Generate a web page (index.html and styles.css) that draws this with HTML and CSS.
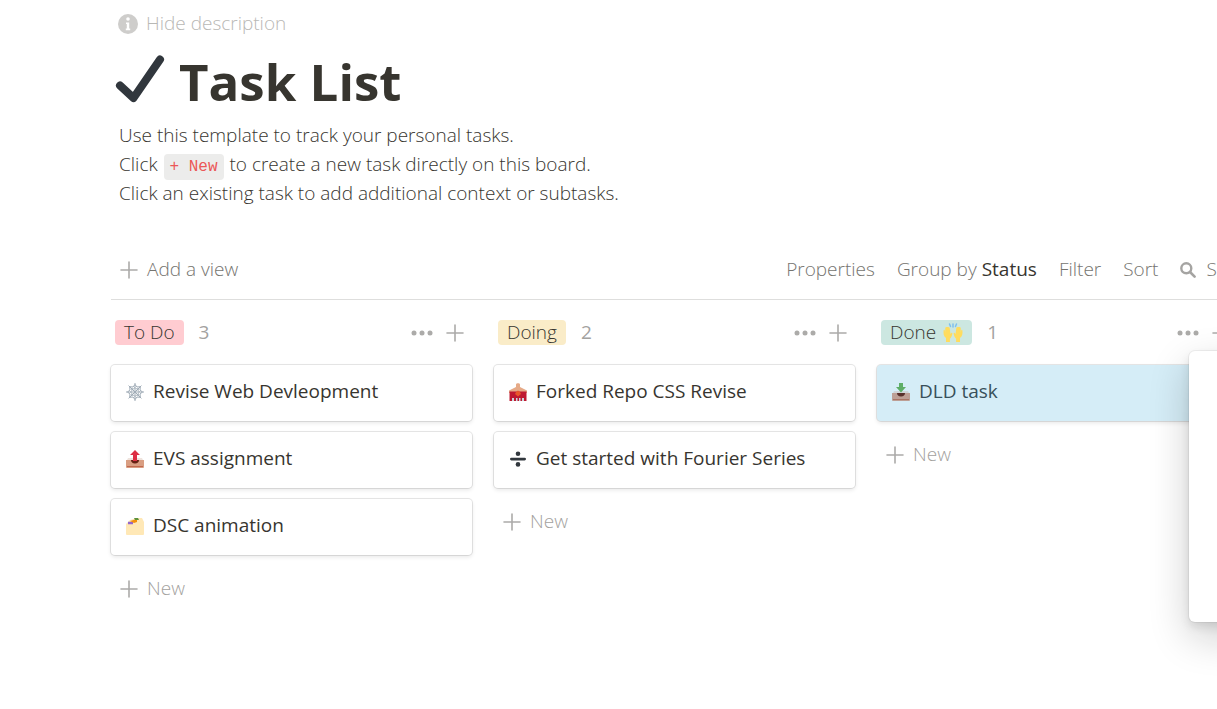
FILE: index.html
```html
<!DOCTYPE html>
<html lang="en">
<head>
    <meta charset="UTF-8">
    <meta name="viewport" content="width=device-width, initial-scale=1.0">
    <title>Task List</title>
    <link rel="stylesheet" href="styles.css">
</head>
<body>
    <!-- shared icons -->
    <svg class="sprite" aria-hidden="true">
        <symbol id="plus" viewBox="0 0 18 18"><path d="M9 1v16M1 9h16" fill="none" stroke="currentColor" stroke-width="1.6" stroke-linecap="round"/></symbol>
        <symbol id="dots" viewBox="0 0 22 6"><circle cx="3" cy="3" r="2.5"/><circle cx="11" cy="3" r="2.5"/><circle cx="19" cy="3" r="2.5"/></symbol>
    </svg>

    <main class="page">
        <button class="hide-description">
            <svg class="icon-info" viewBox="0 0 20 20"><circle cx="10" cy="10" r="10" fill="currentColor"/><circle cx="10" cy="5" r="1.8" fill="#fff"/><path d="M8 8.5h3.2v6h1v1.7H7.8v-1.7h1V10H8z" fill="#fff"/></svg>
            Hide description
        </button>

        <header class="title">
            <svg class="icon-check" viewBox="0 0 50 50"><path d="M5 30.500L18.500 43L45 4.500" fill="none" stroke="#31373d" stroke-width="8" stroke-linecap="round" stroke-linejoin="round"/></svg>
            <h1>Task List</h1>
        </header>

        <div class="description">
            <p>Use this template to track your personal tasks.</p>
            <p>Click <code>+ New</code> to create a new task directly on this board.</p>
            <p>Click an existing task to add additional context or subtasks.</p>
        </div>

        <nav class="toolbar">
            <button class="add-view"><svg class="icon-plus"><use href="#plus"/></svg>Add a view</button>
            <div class="toolbar-right">
                <button>Properties</button>
                <button>Group by <span class="group-name">Status</span></button>
                <button>Filter</button>
                <button>Sort</button>
                <button class="search"><svg class="icon-search" viewBox="0 0 16 16"><circle cx="6.300" cy="6.300" r="5" fill="none" stroke="currentColor" stroke-width="2.400"/><path d="M10 10l4.600 4.600" stroke="currentColor" stroke-width="2.600" stroke-linecap="round"/></svg>Search</button>
            </div>
        </nav>

        <div class="board">
            <section class="column">
                <div class="column-head">
                    <h2 class="tag tag-red">To Do</h2>
                    <span class="count">3</span>
                    <button class="more" aria-label="More"><svg class="icon-dots"><use href="#dots"/></svg></button>
                    <button aria-label="Add"><svg class="icon-plus"><use href="#plus"/></svg></button>
                </div>
                <article class="card">
                    <svg class="emoji" viewBox="0 0 18 18"><g fill="none" stroke="#9fabb6" stroke-width="1"><path d="M9 0v18M0 9h18M2.600 2.600l12.800 12.800M15.400 2.600L2.600 15.400"/><path d="M9 1.500l2 2.500 3.300-.3-.3 3.300 2.500 2-2.500 2 .3 3.300-3.300-.3-2 2.500-2-2.500-3.300.3.300-3.300-2.500-2 2.500-2-.3-3.300L7 4zM9 4.500l1.300 1.300 1.900 0v1.900L13.500 9l-1.300 1.300v1.900h-1.900L9 13.500l-1.300-1.300H5.800v-1.900L4.500 9l1.300-1.300V5.800h1.900z"/></g></svg>
                    <h3>Revise Web Devleopment</h3>
                </article>
                <article class="card">
                    <svg class="emoji" viewBox="0 0 18 18"><path d="M2 8h14l2 4H0z" fill="#efe3dd"/><path d="M0 10h18v7a1 1 0 0 1-1 1H1a1 1 0 0 1-1-1z" fill="#d99e82"/><path d="M5 10h8c0 2-1.500 3.500-4 3.500S5 12 5 10z" fill="#662113"/><path d="M9 0l5 5h-3v6H7V5H4z" fill="#dd2e44"/><path d="M1 16.500h16" stroke="#c1694f"/></svg>
                    <h3>EVS assignment</h3>
                </article>
                <article class="card">
                    <svg class="emoji" viewBox="0 0 18 18"><path d="M0 7l4-4 7-2h5l2 4v12a1 1 0 0 1-1 1H1a1 1 0 0 1-1-1z" fill="#ffe8b6"/><path d="M2 6h5" stroke="#9266cc" stroke-width="2.500"/><path d="M4 4l7-2v3L8 6z" fill="#f4900c"/><path d="M8 1h4l1 2H9z" fill="#5c913b"/></svg>
                    <h3>DSC animation</h3>
                </article>
                <button class="new"><svg class="icon-plus"><use href="#plus"/></svg>New</button>
            </section>

            <section class="column">
                <div class="column-head">
                    <h2 class="tag tag-yellow">Doing</h2>
                    <span class="count">2</span>
                    <button class="more" aria-label="More"><svg class="icon-dots"><use href="#dots"/></svg></button>
                    <button aria-label="Add"><svg class="icon-plus"><use href="#plus"/></svg></button>
                </div>
                <article class="card">
                    <svg class="emoji" viewBox="0 0 18 18"><path d="M7 1.500C7-.2 11-.2 11 1.500V4l7 3.500V10H0V7.500L7 4z" fill="#e6aa87"/><path d="M.5 8.500h17V18H.5z" fill="#be1931"/><path d="M7 9l2-1.500L11 9l1 2-3 2.500L6 11z" fill="#e8562b"/><path d="M3 15h2v3H3zM7 15h1.500v3H7zM10 15h1.500v3H10zM13 15h2v3h-2z" fill="#ccd6dd"/></svg>
                    <h3>Forked Repo CSS Revise</h3>
                </article>
                <article class="card">
                    <svg class="emoji" viewBox="0 0 18 18"><g fill="#31373d"><rect x="1" y="7.700" width="16" height="2.800" rx="1.400"/><circle cx="9" cy="3.800" r="2.300"/><circle cx="9" cy="14.400" r="2.300"/></g></svg>
                    <h3>Get started with Fourier Series</h3>
                </article>
                <button class="new"><svg class="icon-plus"><use href="#plus"/></svg>New</button>
            </section>

            <section class="column">
                <div class="column-head">
                    <h2 class="tag tag-green">Done
                        <svg class="hands" viewBox="0 0 20 20"><g fill="none" stroke="#7fc0ee" stroke-width="1.500" stroke-linecap="round"><path d="M10 1v3M6.500 1l1 2.500M13.500 1l-1 2.500"/></g><path id="hand" d="M3 19v-4C.5 13 .3 10.500.6 7.500c.1-1 1.200-.8 1.200.1l.3 2 .2-4.800c.1-1 4.400-.9 4.400.1L7.500 11c1-1.800 2-1.600 1.900-.5-.3 2-1.200 4.200-2.500 5.300V19z" fill="#ffdc5d"/><use href="#hand" transform="matrix(-1 0 0 1 20 0)"/></svg>
                    </h2>
                    <span class="count">1</span>
                    <button class="more" aria-label="More"><svg class="icon-dots"><use href="#dots"/></svg></button>
                    <button aria-label="Add"><svg class="icon-plus"><use href="#plus"/></svg></button>
                </div>
                <article class="card selected">
                    <svg class="emoji" viewBox="0 0 18 18"><path d="M2 8h14l2 4H0z" fill="#cfd5d8"/><path d="M0 10h18v7a1 1 0 0 1-1 1H1a1 1 0 0 1-1-1z" fill="#bd9f95"/><path d="M5 10h8c0 2-1.500 3.500-4 3.500S5 12 5 10z" fill="#59302b"/><path d="M7 0h4v4h3L9 9.500 4 4h3z" fill="#5eae68"/><path d="M1 16.500h16" stroke="#a97566"/></svg>
                    <h3>DLD task</h3>
                </article>
                <button class="new"><svg class="icon-plus"><use href="#plus"/></svg>New</button>
                <div class="popup" role="menu"></div>
            </section>
        </div>
    </main>
</body>
</html>
```
FILE: styles.css
```css
* {
    box-sizing: border-box;
}

body {
    margin: 0;
    min-height: 100vh;
    background-color: #fff;
    color: #37352f;
    font-family: "Open Sans", "Noto Sans", sans-serif;
    font-size: 19px;
    font-weight: 300;
    line-height: 29px;
    overflow: hidden;
}

h1, h2, h3, p {
    margin: 0;
}

button {
    display: flex;
    align-items: center;
    padding: 0;
    border: none;
    background: none;
    color: inherit;
    font: inherit;
    white-space: nowrap;
    cursor: pointer;
}

svg {
    flex: none;
}

.sprite {
    display: none;
}

.page {
    margin-right: -48px;
    padding: 9px 0 0 111px;
}

.hide-description {
    gap: 8px;
    padding-left: 7px;
    color: #b9b8b5;
}

.icon-info {
    width: 20px;
    height: 20px;
    color: #cecdcb;
}

.title {
    display: flex;
    align-items: center;
    gap: 14px;
    height: 83px;
    padding-left: 4px;
}

.title h1 {
    padding-top: 2px;
    font-size: 51px;
    font-weight: 700;
    line-height: 64px;
}

.icon-check {
    width: 50px;
    height: 50px;
}

.description {
    padding-left: 8px;
}

.description code {
    margin: 0 1px;
    padding: 4px 6px;
    border-radius: 4px;
    background-color: #ececeb;
    color: #eb5757;
    font-family: "Liberation Mono", monospace;
    font-size: 16px;
    line-height: 16px;
}

/* toolbar */
.toolbar {
    display: flex;
    justify-content: space-between;
    margin-top: 31px;
    padding: 16px 0 15px 9px;
    border-bottom: 1px solid #dededd;
    color: #75746f;
}

.toolbar-right {
    display: flex;
    gap: 22px;
}

.group-name {
    margin-left: 5px;
    color: #37352f;
    font-weight: 400;
}

.icon-plus {
    width: 18px;
    height: 18px;
    color: #acaba9;
}

.add-view, .new {
    gap: 9px;
}

.search {
    gap: 10px;
}

.icon-search {
    width: 16px;
    height: 16px;
    color: #a5a4a2;
}

/* board */
.board {
    display: flex;
    gap: 22px;
}

.column {
    position: relative;
    display: flex;
    flex: none;
    flex-direction: column;
    width: 361px;
}

.column-head {
    display: flex;
    align-items: center;
    height: 65px;
    padding: 0 8px 0 4px;
}

.tag {
    display: flex;
    align-items: center;
    gap: 7px;
    height: 25px;
    padding: 0 9px;
    border-radius: 4px;
    font-size: 19px;
    font-weight: 300;
}

.tag-red {
    background-color: #ffccd1;
}

.tag-yellow {
    background-color: #faecc8;
}

.tag-green {
    background-color: #cce7e1;
}

.hands {
    width: 20px;
    height: 20px;
}

.count {
    margin-left: 15px;
    color: #a3a29f;
    font-weight: 400;
}

.more {
    margin-left: auto;
    margin-right: 13px;
}

.icon-dots {
    width: 22px;
    height: 6px;
    fill: #acaba9;
}

.card {
    display: flex;
    align-items: center;
    gap: 9px;
    height: 56px;
    margin-bottom: 11px;
    padding: 0 15px 3px;
    border-radius: 4px;
    background-color: #fff;
    box-shadow: 0 0 0 1px rgba(15, 15, 15, 0.1), 0 2px 4px rgba(15, 15, 15, 0.1);
}

.card h3 {
    font-size: 19px;
    font-weight: 500;
}

.card.selected {
    background-color: #d5edf7;
    color: #38505a;
}

.emoji {
    width: 18px;
    height: 18px;
}

.new {
    margin-top: 8px;
    padding-left: 9px;
    color: #a3a19e;
}

.popup {
    position: absolute;
    top: 51px;
    left: 312px;
    width: 320px;
    height: 271px;
    border-radius: 6px;
    background-color: #fff;
    box-shadow: 0 0 0 1px rgba(15, 15, 15, 0.05), 0 5px 10px rgba(15, 15, 15, 0.1), 0 15px 40px rgba(15, 15, 15, 0.2);
}
```
